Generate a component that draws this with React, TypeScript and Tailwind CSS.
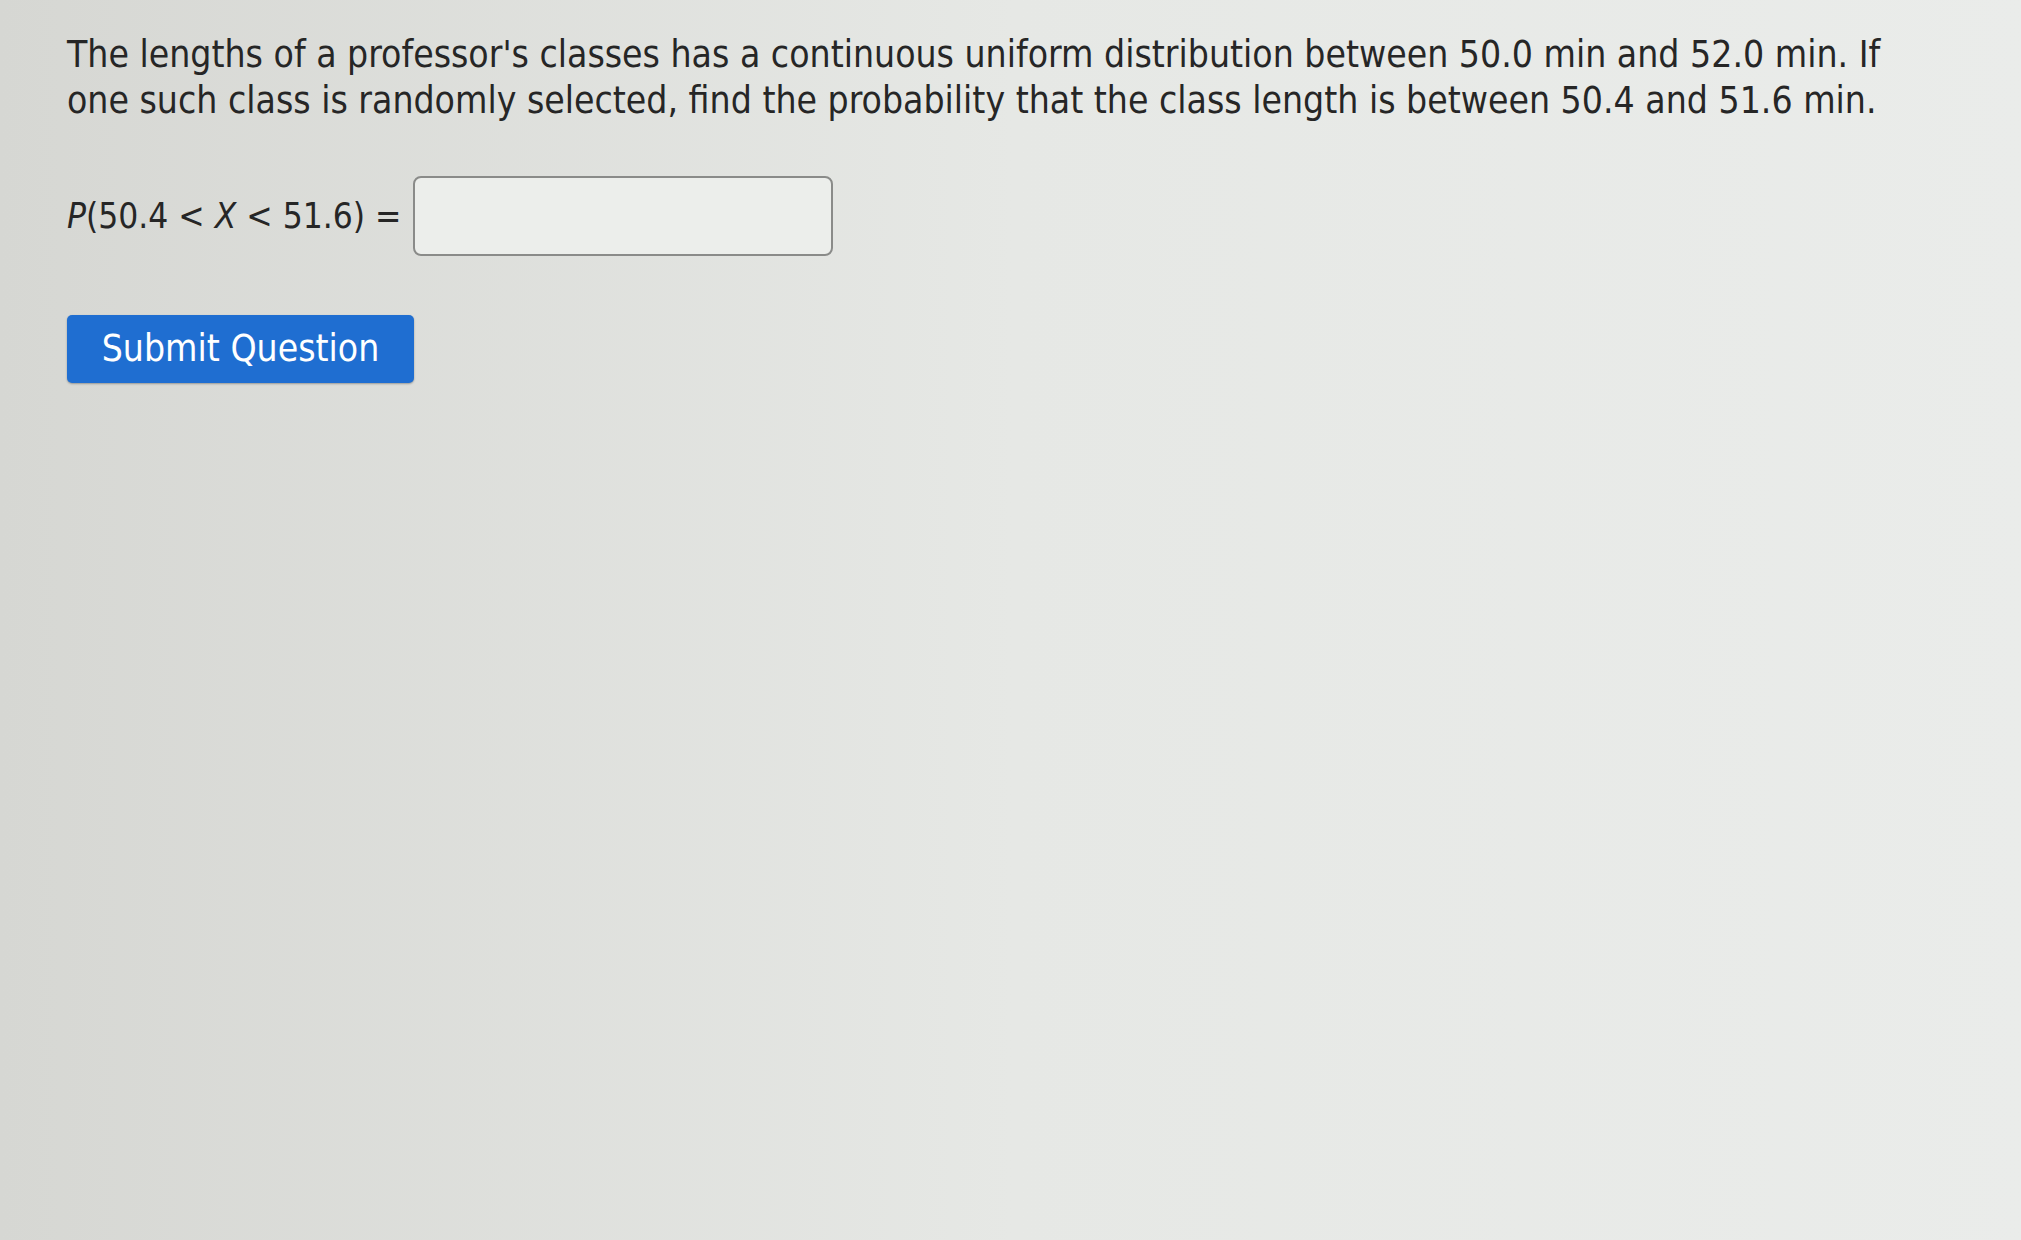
export default function App() {
  return (
    <div className="min-h-[1240px] w-full bg-gradient-to-r from-[#d6d7d3] via-[#e6e8e5] to-[#eaecea] font-['DejaVu_Sans_Condensed','DejaVu_Sans',sans-serif] text-[#262626]">
      <div className="px-[67px] pt-[32px]">
        {/* Question */}
        <p className="max-w-[1860px] text-[37px] leading-[46px] [font-stretch:condensed]">
          The lengths of a professor's classes has a continuous uniform distribution between 50.0 min and 52.0 min. If
          one such class is randomly selected, find the probability that the class length is between 50.4 and 51.6 min.
        </p>

        {/* Answer row */}
        <div className="mt-[52px] flex items-center">
          <span className="text-[35px] [font-stretch:condensed]">
            <i>P</i>(50.4 &lt; <i>X</i> &lt; 51.6) =
          </span>
          <input
            type="text"
            className="ml-[12px] h-[80px] w-[420px] rounded-[8px] border-2 border-[#8a8b89] bg-[#eceeeb] outline-none"
          />
        </div>

        {/* Submit */}
        <button className="mt-[59px] h-[68px] w-[347px] rounded-[5px] bg-[#1f6ed1] text-[37px] text-white shadow-[0_1px_2px_rgba(0,0,0,0.3)] [font-stretch:condensed]">
          Submit Question
        </button>
      </div>
    </div>
  );
}
